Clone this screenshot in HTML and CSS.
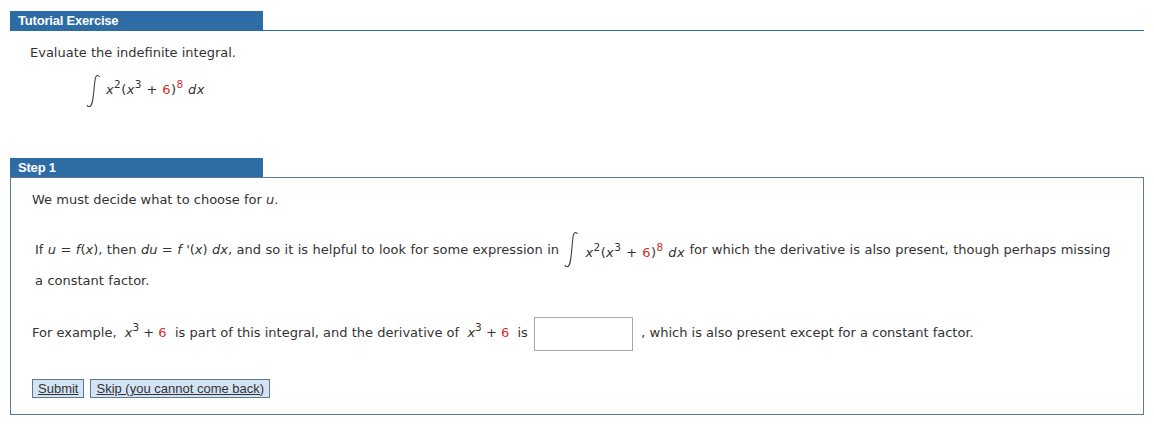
FILE: index.html
```html
<!DOCTYPE html>
<html>
<head>
<meta charset="utf-8">
<link rel="stylesheet" href="styles.css">
</head>
<body>
<div class="page">
  <div class="head"><div class="bar">Tutorial Exercise</div></div>
  <p class="intro">Evaluate the indefinite integral.</p>
  <div class="expr main">
    <svg class="int big" width="16" height="34" viewBox="0 0 16 34"><path d="M14.5 3 C13.6 1 11.4 1 10.6 3.4 C9.6 6.5 9.2 14 8.4 21 C7.6 28 7 32.6 4.2 32.7 C2.8 32.7 2.2 31.8 2 31" fill="none" stroke="#444" stroke-width="1.1"/></svg>
    <span class="m"><i>x</i><sup>2</sup>(<i>x</i><sup>3</sup> + <span class="red">6</span>)<sup class="red">8</sup> <i>dx</i></span>
  </div>
  <div class="step">
    <div class="bar">Step 1</div>
    <div class="box">
      <p class="p1">We must decide what to choose for <i>u</i>.</p>
      <p class="p2">If <i>u</i> = <i>f</i>(<i>x</i>), then <i>du</i> = <i>f</i> '(<i>x</i>) <i>dx</i>, and so it is helpful to look for some expression in <svg class="int inl" width="16" height="37" viewBox="0 0 16 37"><path d="M14.5 3 C13.6 1 11.4 1 10.6 3.4 C9.6 6.5 9.2 15 8.4 22.5 C7.6 30 7 35.6 4.2 35.7 C2.8 35.7 2.2 34.8 2 34" fill="none" stroke="#444" stroke-width="1.1"/></svg><span class="m low"><i>x</i><sup>2</sup>(<i>x</i><sup>3</sup> + <span class="red">6</span>)<sup class="red">8</sup> <i>dx</i></span> <span>for which the derivative is also present, though perhaps missing</span> <span>a constant factor.</span></p>
      <p class="p3">For example, &nbsp;<i>x</i><sup>3</sup> + <span class="red">6</span>&nbsp; is part of this integral, and the derivative of &nbsp;<i>x</i><sup>3</sup> + <span class="red">6</span>&nbsp; is <input class="ans" type="text"> &nbsp;, which is also present except for a constant factor.</p>
      <div class="btns"><button class="btn">Submit</button><button class="btn">Skip (you cannot come back)</button></div>
    </div>
  </div>
</div>
</body>
</html>
```
FILE: styles.css
```css
html, body { margin: 0; padding: 0; background: #fff; }
body { font-family: "DejaVu Sans", Verdana, sans-serif; font-size: 13px; color: #333; }
.page { padding: 11px 10px 0 10px; }
.head { border-bottom: 1px solid #2e6ca5; }
.bar { width: 245px; height: 19px; background: #2e6ca5; color: #fff; font-family: "Liberation Sans", Arial, sans-serif; font-weight: bold; font-size: 13px; line-height: 19px; padding-left: 8px; letter-spacing: -0.2px; }
.intro { margin: 14px 0 0 20px; line-height: 16px; }
.expr.main { margin: 13px 0 0 75px; display: flex; align-items: flex-start; height: 34px; }
.expr.main .m { margin-top: 8px; margin-left: 5px; }
.int { display: inline-block; }
.inl { vertical-align: -10px; margin: -4px 0 -4px 0; }
.m { margin-left: 6px; letter-spacing: 0.4px; }
.low { vertical-align: -3px; line-height: 16px; }
i { font-style: italic; }
sup { font-size: 10.5px; vertical-align: 6px; line-height: 0; }
.red { color: #d62e2e; }
.step { margin-top: 50px; }
.box { border: 1px solid #5d7a95; padding: 14px 21px 16px 21px; }
.p1 { margin: 0; line-height: 16px; }
.p2 { margin: 26px 5px 0 3px; line-height: 31px; word-spacing: 0.3px; }
.p3 { margin: 20px 0 0 0; line-height: 34px; }
.ans { width: 99px; height: 34px; box-sizing: border-box; border: 1px solid #a8a8a8; vertical-align: middle; padding: 0; margin: 0 0 0 2px; }
.btns { margin-top: 28px; display: flex; gap: 6px; }
.btn { font-family: "Liberation Sans", Arial, sans-serif; font-size: 13px; color: #333; text-decoration: underline; background: #d3e3f3; border: 1px solid #5d7a95; padding: 0 5px; height: 19px; line-height: 17px; margin: 0; border-radius: 0; }
```
